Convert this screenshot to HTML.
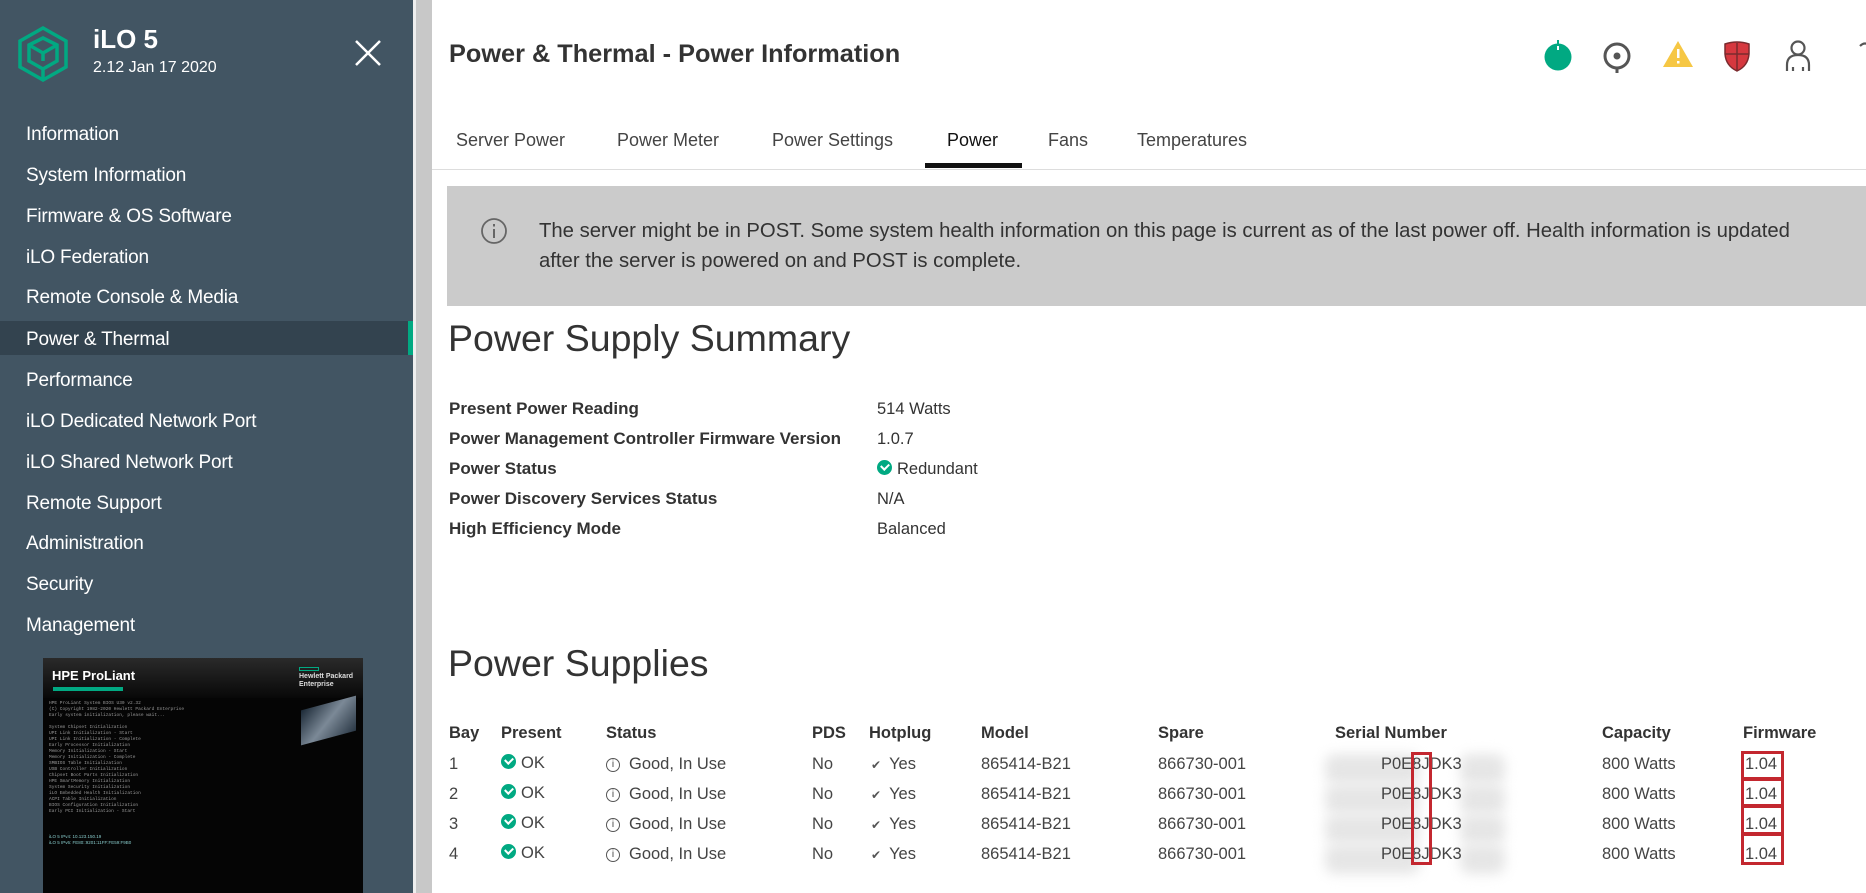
<!DOCTYPE html>
<html><head><meta charset="utf-8"><style>
*{margin:0;padding:0;box-sizing:border-box}
body{width:1866px;height:893px;overflow:hidden;background:#fff;font-family:"Liberation Sans",sans-serif;position:relative;color:#333}
.abs{position:absolute;white-space:nowrap}
#side{position:absolute;left:0;top:0;width:413px;height:893px;background:#425563}
.nav{position:absolute;left:26px;color:#fff;font-size:19px;letter-spacing:-0.2px}
#act{position:absolute;left:0;top:321px;width:413px;height:34px;background:#33434f}
#actbar{position:absolute;left:408px;top:321px;width:5px;height:34px;background:#01a982}
#scroll{position:absolute;left:413px;top:0;width:19px;height:893px;background:#c8c8c8;border-left:3px solid #eee}
.tab{position:absolute;top:130px;font-size:18px;color:#444}
.lbl{position:absolute;left:449px;font-size:17px;font-weight:bold;color:#333}
.val{position:absolute;left:877px;font-size:16.5px;color:#333}
.th{position:absolute;top:724px;font-size:16.5px;font-weight:bold;color:#333}
.td{position:absolute;font-size:16.5px;color:#444}
.ok{display:inline-block;width:15px;height:15px;border-radius:50%;background:#01a982;vertical-align:-1px;margin-right:5px;position:relative}
.ok:after{content:"";position:absolute;left:4px;top:3px;width:6px;height:4px;border-left:2px solid #fff;border-bottom:2px solid #fff;transform:rotate(-45deg)}
.inf{display:inline-block;width:14px;height:14px;border:1px solid #555;border-radius:50%;font-size:10px;text-align:center;line-height:12px;margin-right:9px;vertical-align:2px}
.ck{font-size:12px;color:#555;margin-right:8px}
.blur{position:absolute;width:95px;height:30px;background:#e6e6e6;filter:blur(6px);border-radius:10px}
.rb{position:absolute;border:3px solid #c3272f}
</style></head><body>
<div id="side"></div>
<div id="act"></div><div id="actbar"></div>
<svg class="abs" style="left:17px;top:25px" width="52" height="58" viewBox="0 0 52 58"><g fill="none" stroke="#01a982" stroke-width="3.5"><polygon points="26,3 49,16 49,42 26,55 3,42 3,16"/><path d="M12,20 L26,13 L40,20 L40,36 L26,44 L12,36 Z M26,44 V55 M12,20 L26,28 L40,20 M26,28 V36"/></g></svg>
<div class="abs" style="left:93px;top:24px;color:#fff;font-size:26px;font-weight:bold">iLO 5</div>
<div class="abs" style="left:93px;top:59px;color:#fff;font-size:16px">2.12 Jan 17 2020</div>
<svg class="abs" style="left:355px;top:40px" width="26" height="26"><path d="M1,1 L25,25 M25,1 L1,25" stroke="#fff" stroke-width="2.5"/></svg>
<div class="nav" style="top:124px">Information</div>
<div class="nav" style="top:165px">System Information</div>
<div class="nav" style="top:206px">Firmware &amp; OS Software</div>
<div class="nav" style="top:247px">iLO Federation</div>
<div class="nav" style="top:287px">Remote Console &amp; Media</div>
<div class="nav" style="top:329px">Power &amp; Thermal</div>
<div class="nav" style="top:370px">Performance</div>
<div class="nav" style="top:411px">iLO Dedicated Network Port</div>
<div class="nav" style="top:452px">iLO Shared Network Port</div>
<div class="nav" style="top:493px">Remote Support</div>
<div class="nav" style="top:533px">Administration</div>
<div class="nav" style="top:574px">Security</div>
<div class="nav" style="top:615px">Management</div>
<div class="abs" style="left:43px;top:658px;width:320px;height:235px;background:#050505">
 <div style="height:40px;background:linear-gradient(#2a2a2a,#080808)"></div>
 <div class="abs" style="left:9px;top:10px;color:#fff;font-size:13px;font-weight:bold">HPE ProLiant</div>
 <div class="abs" style="left:10px;top:29px;width:70px;height:4px;background:#01a982"></div>
 <div class="abs" style="left:256px;top:9px;width:20px;height:4px;border:1px solid #01a982"></div>
 <div class="abs" style="left:256px;top:15px;color:#ddd;font-size:7px;line-height:8px;font-weight:bold">Hewlett Packard<br>Enterprise</div>
 <div class="abs" style="left:258px;top:45px;width:55px;height:35px;background:linear-gradient(135deg,#234,#9ab,#345);transform:skewY(-15deg);opacity:.8"></div>
 <div class="abs" style="left:6px;top:43px;color:#999;font-size:4.5px;line-height:6px;font-family:'Liberation Mono',monospace">HPE ProLiant System BIOS U30 v2.32<br>(C) Copyright 1982-2020 Hewlett Packard Enterprise<br>Early system initialization, please wait...<br><br>System Chipset Initialization<br>UPI Link Initialization - Start<br>UPI Link Initialization - Complete<br>Early Processor Initialization<br>Memory Initialization - Start<br>Memory Initialization - Complete<br>SMBIOS Table Initialization<br>USB Controller Initialization<br>Chipset Boot Parts Initialization<br>HPE SmartMemory Initialization<br>System Security Initialization<br>iLO Embedded Health Initialization<br>ACPI Table Initialization<br>BIOS Configuration Initialization<br>Early PCI Initialization - Start</div>
 <div class="abs" style="left:6px;top:176px;color:#8cc;font-size:4.5px;line-height:6px">iLO 5 IPv4: 10.123.150.19<br>iLO 5 IPv6: FE80::9201:11FF:FE59:F9B0</div>
</div>
<div id="scroll"></div>

<div class="abs" style="left:449px;top:40px;font-size:25.3px;font-weight:bold;color:#333">Power &amp; Thermal - Power Information</div>
<svg class="abs" style="left:1540px;top:38px" width="340" height="36">
 <circle cx="18" cy="19" r="13.5" fill="#01a982"/><rect x="17" y="2" width="2" height="10" fill="#fff"/><rect x="17" y="2" width="2" height="6" fill="#01a982"/>
 <circle cx="77" cy="18" r="12" fill="none" stroke="#555" stroke-width="3"/><circle cx="77" cy="18" r="3.5" fill="#555"/><rect x="75.5" y="29" width="3" height="6" fill="#555"/>
 <polygon points="138,3 153,29 123,29" fill="#f6c744"/><rect x="137" y="11" width="2.5" height="9" fill="#fff"/><rect x="137" y="23" width="2.5" height="2.5" fill="#fff"/>
 <path d="M185,6 Q197,2 209,6 L209,16 Q208,28 197,33 Q186,28 185,16 Z" fill="#d6383f" stroke="#7a2a2e" stroke-width="1.5"/><path d="M197,5 V32 M185,16 H209" stroke="#7a2a2e" stroke-width="1.5"/>
 <circle cx="258" cy="10" r="6.5" fill="none" stroke="#555" stroke-width="2.2"/><path d="M247,33 V27 Q247,17 258,17 Q269,17 269,27 V33 M253,29 v4 M263,29 v4" fill="none" stroke="#555" stroke-width="2.2"/>
 <path d="M320,8 q5,-5 10,0" fill="none" stroke="#555" stroke-width="2.2"/>
</svg>
<div class="tab" style="left:456px">Server Power</div>
<div class="tab" style="left:617px">Power Meter</div>
<div class="tab" style="left:772px">Power Settings</div>
<div class="tab" style="left:947px;color:#111">Power</div>
<div class="tab" style="left:1048px">Fans</div>
<div class="tab" style="left:1137px">Temperatures</div>
<div class="abs" style="left:925px;top:163px;width:97px;height:5px;background:#111"></div>
<div class="abs" style="left:432px;top:169px;width:1434px;height:1px;background:#ddd"></div>

<div class="abs" style="left:447px;top:186px;width:1419px;height:120px;background:#cbcbcb"></div>
<svg class="abs" style="left:480px;top:217px" width="28" height="28"><circle cx="14" cy="14" r="12" fill="none" stroke="#666" stroke-width="1.8"/><rect x="13" y="12" width="2" height="9" fill="#666"/><rect x="13" y="7" width="2" height="2.5" fill="#666"/></svg>
<div class="abs" style="left:539px;top:216px;font-size:20.3px;line-height:30px;color:#333">The server might be in POST. Some system health information on this page is current as of the last power off. Health information is updated<br>after the server is powered on and POST is complete.</div>

<div class="abs" style="left:448px;top:317px;font-size:37.5px;color:#333">Power Supply Summary</div>
<div class="lbl" style="top:399px">Present Power Reading</div>
<div class="lbl" style="top:429px">Power Management Controller Firmware Version</div>
<div class="lbl" style="top:459px">Power Status</div>
<div class="lbl" style="top:489px">Power Discovery Services Status</div>
<div class="lbl" style="top:519px">High Efficiency Mode</div>
<div class="val" style="top:400px">514 Watts</div>
<div class="val" style="top:430px">1.0.7</div>
<div class="val" style="top:460px"><span class="ok"></span>Redundant</div>
<div class="val" style="top:490px">N/A</div>
<div class="val" style="top:520px">Balanced</div>

<div class="abs" style="left:448px;top:642px;font-size:37.5px;color:#333">Power Supplies</div>
<div class="th" style="left:449px">Bay</div>
<div class="th" style="left:501px">Present</div>
<div class="th" style="left:606px">Status</div>
<div class="th" style="left:812px">PDS</div>
<div class="th" style="left:869px">Hotplug</div>
<div class="th" style="left:981px">Model</div>
<div class="th" style="left:1158px">Spare</div>
<div class="th" style="left:1335px">Serial Number</div>
<div class="th" style="left:1602px">Capacity</div>
<div class="th" style="left:1743px">Firmware</div>

<div class="blur" style="left:1325px;top:754px"></div><div class="blur" style="left:1460px;top:754px;width:45px"></div>
<div class="blur" style="left:1325px;top:784px"></div><div class="blur" style="left:1460px;top:784px;width:45px"></div>
<div class="blur" style="left:1325px;top:814px"></div><div class="blur" style="left:1460px;top:814px;width:45px"></div>
<div class="blur" style="left:1325px;top:844px"></div><div class="blur" style="left:1460px;top:844px;width:45px"></div>

<div class="td" style="left:449px;top:755px">1</div><div class="td" style="left:501px;top:754px"><span class="ok"></span>OK</div><div class="td" style="left:606px;top:755px"><span class="inf">i</span>Good, In Use</div><div class="td" style="left:812px;top:755px">No</div><div class="td" style="left:871px;top:755px"><span class="ck">✔</span>Yes</div><div class="td" style="left:981px;top:755px">865414-B21</div><div class="td" style="left:1158px;top:755px">866730-001</div><div class="td" style="left:1381px;top:755px">P0E8JDK3</div><div class="td" style="left:1602px;top:755px">800 Watts</div><div class="td" style="left:1745px;top:755px">1.04</div>
<div class="td" style="left:449px;top:785px">2</div><div class="td" style="left:501px;top:784px"><span class="ok"></span>OK</div><div class="td" style="left:606px;top:785px"><span class="inf">i</span>Good, In Use</div><div class="td" style="left:812px;top:785px">No</div><div class="td" style="left:871px;top:785px"><span class="ck">✔</span>Yes</div><div class="td" style="left:981px;top:785px">865414-B21</div><div class="td" style="left:1158px;top:785px">866730-001</div><div class="td" style="left:1381px;top:785px">P0E8JDK3</div><div class="td" style="left:1602px;top:785px">800 Watts</div><div class="td" style="left:1745px;top:785px">1.04</div>
<div class="td" style="left:449px;top:815px">3</div><div class="td" style="left:501px;top:814px"><span class="ok"></span>OK</div><div class="td" style="left:606px;top:815px"><span class="inf">i</span>Good, In Use</div><div class="td" style="left:812px;top:815px">No</div><div class="td" style="left:871px;top:815px"><span class="ck">✔</span>Yes</div><div class="td" style="left:981px;top:815px">865414-B21</div><div class="td" style="left:1158px;top:815px">866730-001</div><div class="td" style="left:1381px;top:815px">P0E8JDK3</div><div class="td" style="left:1602px;top:815px">800 Watts</div><div class="td" style="left:1745px;top:815px">1.04</div>
<div class="td" style="left:449px;top:845px">4</div><div class="td" style="left:501px;top:844px"><span class="ok"></span>OK</div><div class="td" style="left:606px;top:845px"><span class="inf">i</span>Good, In Use</div><div class="td" style="left:812px;top:845px">No</div><div class="td" style="left:871px;top:845px"><span class="ck">✔</span>Yes</div><div class="td" style="left:981px;top:845px">865414-B21</div><div class="td" style="left:1158px;top:845px">866730-001</div><div class="td" style="left:1381px;top:845px">P0E8JDK3</div><div class="td" style="left:1602px;top:845px">800 Watts</div><div class="td" style="left:1745px;top:845px">1.04</div>

<div class="rb" style="left:1411px;top:752px;width:21px;height:113px"></div>
<div class="rb" style="left:1741px;top:751px;width:43px;height:29px"></div>
<div class="rb" style="left:1741px;top:778px;width:43px;height:29px"></div>
<div class="rb" style="left:1741px;top:805px;width:43px;height:30px"></div>
<div class="rb" style="left:1741px;top:833px;width:43px;height:32px"></div>
</body></html>
